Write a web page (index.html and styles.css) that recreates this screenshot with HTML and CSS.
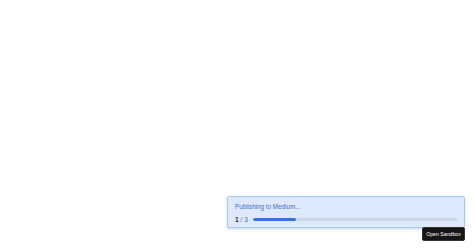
FILE: index.html
```html
<!DOCTYPE html>
<html>
<head>
<meta charset="utf-8">
<link rel="stylesheet" href="styles.css">
</head>
<body>
<div class="page">
  <div class="card">
    <div class="title">Publishing to Medium...</div>
    <div class="row">
      <span class="count"><b>1</b> / 3</span>
      <div class="track"><div class="fill" style="width:21%"></div></div>
    </div>
  </div>
</div>
<a class="sandbox">Open Sandbox</a>
</body>
</html>
```
FILE: styles.css
```css
html, body { margin: 0; padding: 0; background: #fff; }
body { font-family: "Liberation Sans", Arial, sans-serif; }
.page {
  height: 248px;
  display: flex;
  flex-direction: column;
  justify-content: flex-end;
  align-items: flex-end;
  padding: 0 9px 20px 0;
  box-sizing: border-box;
}
.card {
  width: 238px;
  height: 32px;
  box-sizing: border-box;
  background: #dde9fd;
  border: 1px solid #a9c7f6;
  border-radius: 2px;
  box-shadow: 0 1px 3px rgba(60, 90, 150, 0.25);
  padding: 5px 6px 0 7px;
  display: flex;
  flex-direction: column;
  gap: 4px;
}
.title {
  font-size: 6.3px;
  line-height: 9px;
  color: #3f6fd0;
}
.row {
  display: flex;
  align-items: center;
  gap: 5px;
  height: 9px;
}
.count {
  font-size: 6.6px;
  color: #5b6b85;
  white-space: nowrap;
}
.count b { color: #1f2937; font-weight: 700; }
.track {
  flex: 1;
  height: 3px;
  background: #ccd6e6;
  border-radius: 2px;
  overflow: hidden;
}
.fill {
  height: 100%;
  background: #3a72dc;
  border-radius: 2px;
}
.sandbox {
  position: fixed;
  right: 9px;
  bottom: 7px;
  width: 43px;
  height: 14px;
  box-sizing: border-box;
  display: flex;
  align-items: center;
  justify-content: center;
  background: #151515;
  color: #fff;
  font-size: 5.2px;
  border-radius: 2px;
  border: 1px solid #333;
  white-space: nowrap;
}
```
